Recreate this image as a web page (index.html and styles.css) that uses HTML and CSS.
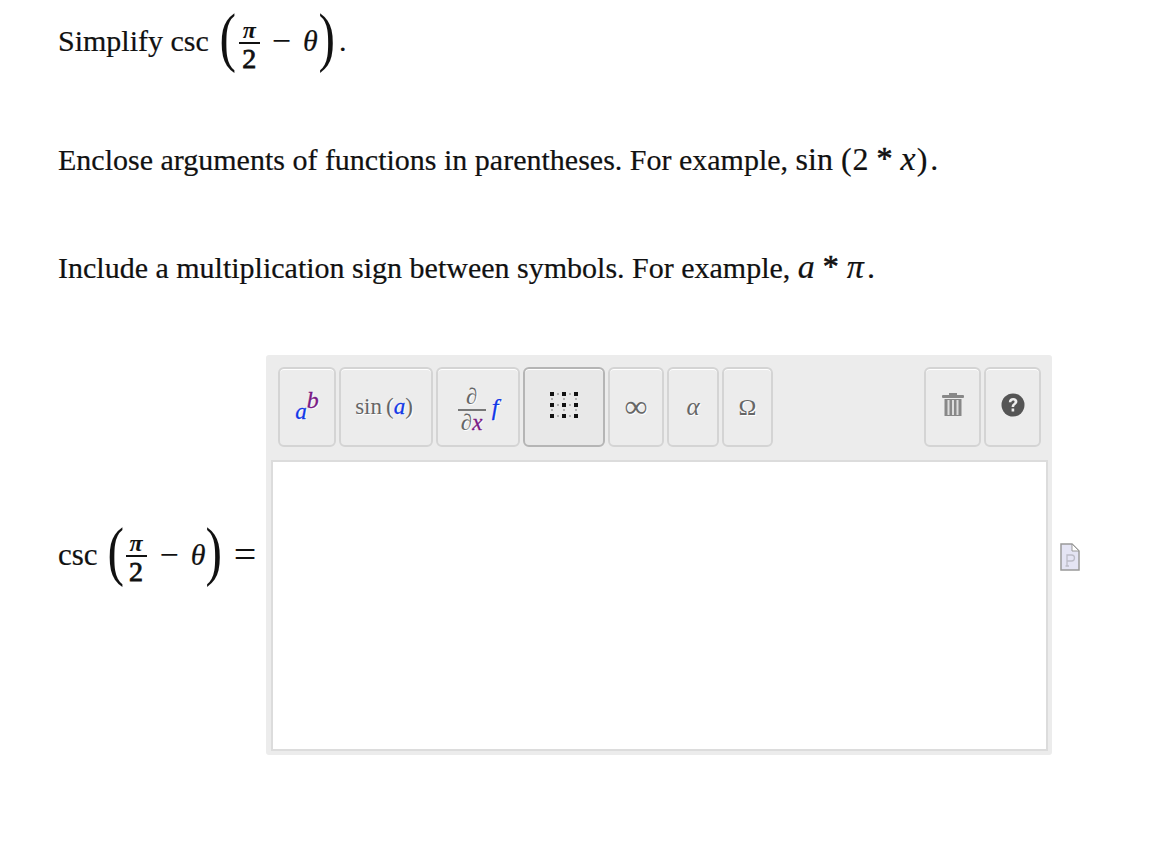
FILE: index.html
```html
<!DOCTYPE html>
<html lang="en">

<head>
    <meta charset="UTF-8">
    <title>Simplify csc</title>
    <link rel="stylesheet" href="styles.css">
</head>

<body>
    <div class="page">
        <div class="prompt first">
            <span>Simplify csc</span>
            <span class="paren">(</span>
            <span class="frac"><i class="num">π</i><span class="den">2</span></span>
            <span class="minus">−</span>
            <i class="theta">θ</i>
            <span class="paren right">)</span>
            <span class="dot">.</span>
        </div>

        <div class="prompt second">Enclose arguments of functions in parentheses. For example, <span class="math">sin<span class="mpar">(</span>2<span class="star">*</span><i class="mvar">x</i><span class="mpar close">)</span><span class="mdot">.</span></span></div>

        <div class="prompt third">Include a multiplication sign between symbols. For example, <span class="math"><i class="mvar">a</i><span class="star">*</span><i class="mvar">π</i><span class="mdot">.</span></span></div>

        <div class="answer-row">
            <div class="label">
                <span class="csc">csc</span>
                <span class="paren">(</span>
                <span class="frac"><i class="num">π</i><span class="den">2</span></span>
                <span class="minus">−</span>
                <i class="theta">θ</i>
                <span class="paren right">)</span>
                <span class="equals">=</span>
            </div>

            <div class="editor">
                <div class="toolbar">
                    <button class="tool w-power"><i class="blue">a</i><sup class="purple">b</sup></button>
                    <button class="tool w-func">sin<span class="fn-par">(</span><i class="blue">a</i><span class="fn-par-r">)</span></button>
                    <button class="tool w-deriv">
                        <span class="dfrac"><span class="dtop">∂</span><span class="dbot">∂<i class="purple">x</i></span></span>
                        <i class="blue fvar">f</i>
                    </button>
                    <button class="tool w-matrix active">
                        <svg class="tool-icon" width="30" height="28" viewBox="0 0 30 28">
                            <g fill="#111">
                                <rect x="1" y="1" width="4" height="4" />
                                <rect x="13" y="1" width="4" height="4" />
                                <rect x="25" y="1" width="4" height="4" />
                                <rect x="1" y="12" width="4" height="4" />
                                <rect x="13" y="12" width="4" height="4" />
                                <rect x="25" y="12" width="4" height="4" />
                                <rect x="1" y="23" width="4" height="4" />
                                <rect x="13" y="23" width="4" height="4" />
                                <rect x="25" y="23" width="4" height="4" />
                            </g>
                            <g fill="#b0b0b0">
                                <rect x="8" y="2" width="2" height="2" />
                                <rect x="20" y="2" width="2" height="2" />
                                <rect x="8" y="13" width="2" height="2" />
                                <rect x="20" y="13" width="2" height="2" />
                                <rect x="8" y="24" width="2" height="2" />
                                <rect x="20" y="24" width="2" height="2" />
                                <rect x="2" y="7" width="2" height="2" />
                                <rect x="14" y="7" width="2" height="2" />
                                <rect x="26" y="7" width="2" height="2" />
                                <rect x="2" y="18" width="2" height="2" />
                                <rect x="14" y="18" width="2" height="2" />
                                <rect x="26" y="18" width="2" height="2" />
                            </g>
                        </svg>
                    </button>
                    <button class="tool w-inf"><span class="inf">∞</span></button>
                    <button class="tool w-alpha"><i class="alpha">α</i></button>
                    <button class="tool w-omega"><span class="omega">Ω</span></button>
                    <span class="spacer"></span>
                    <button class="tool w-icon">
                        <svg class="tool-icon" width="22" height="24" viewBox="0 0 22 24">
                            <rect x="7" y="0" width="8" height="2" fill="#888" />
                            <rect x="0" y="2" width="22" height="3" rx="1" fill="#888" />
                            <path d="M2.500 6h17v17h-17z" fill="#888" />
                            <path d="M5.500 7h2v15h-2zM10 7h2v15h-2zM14.500 7h2v15h-2z" fill="#ddd" />
                        </svg>
                    </button>
                    <button class="tool w-icon">
                        <svg class="tool-icon" width="24" height="24" viewBox="0 0 24 24">
                            <circle cx="12" cy="12" r="11.500" fill="#555" />
                            <path d="M7.800 9.200c0-2.600 1.900-4.200 4.400-4.200 2.500 0 4.200 1.500 4.200 3.600 0 2.900-3.200 3-3.200 5.400h-2.600c0-3.400 3-3.600 3-5.300 0-.8-.6-1.300-1.500-1.300-1 0-1.600.7-1.700 1.800z" fill="#eee" />
                            <rect x="10.600" y="15.500" width="2.600" height="3" fill="#eee" />
                        </svg>
                    </button>
                </div>
                <div class="input-box"></div>
            </div>

            <svg class="doc-icon" width="20" height="28" viewBox="0 0 20 28">
                <path d="M1 1h11l7 7v19H1z" fill="#e4e4f4" stroke="#999" stroke-width="1.500" />
                <path d="M12 1v7h7z" fill="#fff" stroke="#999" />
                <path d="M7 23V12h4.500a3 3 0 0 1 0 6H7M5.500 23h3.500" fill="none" stroke="#bcbcc8" stroke-width="1.300" />
            </svg>
        </div>
    </div>
</body>

</html>
```

FILE: styles.css
```css
body {
    margin: 0;
    font-family: "Liberation Serif", serif;
    font-size: 30px;
    color: #111;
    background: #fff;
}

.page {
    padding: 0 0 0 58px;
}

.prompt {
    line-height: 34px;
    white-space: nowrap;
    -webkit-text-stroke: 0.2px #111;
}

.first {
    display: flex;
    align-items: center;
    height: 66px;
    margin-top: 8px;
}

.second {
    margin-top: 69px;
}

.third {
    margin-top: 74px;
}

.paren {
    font-size: 66px;
    line-height: 60px;
    font-weight: normal;
    transform: scaleX(0.75);
    width: 20px;
    margin: -8px 0 0 8px;
    text-align: center;
    -webkit-text-stroke: 0;
}

.paren.right {
    margin-left: -2px;
}

.frac {
    display: inline-flex;
    flex-direction: column;
    align-items: center;
    width: 21px;
    margin: 12px 0 0 2px;
}

.num {
    width: 100%;
    text-align: center;
    border-bottom: 2px solid #111;
    padding-bottom: 2px;
    font-size: 24px;
    line-height: 20px;
    font-weight: bold;
    -webkit-text-stroke: 0;
}

.den {
    font-size: 28px;
    line-height: 30px;
    -webkit-text-stroke: 0.8px #111;
}

.minus {
    font-size: 34px;
    line-height: 34px;
    margin-left: 12px;
    -webkit-text-stroke: 0;
}

.theta {
    margin-left: 12px;
    width: 15px;
    font-size: 30px;
}

.dot {
    margin: 0 0 0 3px;
    align-self: flex-end;
    padding-bottom: 16px;
}

.math {
    font-size: 32px;
    line-height: 0;
}

.mpar {
    margin: 0 1px 0 8px;
}

.mpar.close {
    margin: 0 0 0 1px;
}

.mdot {
    margin-left: 3px;
}

.star {
    font-size: 32px;
    line-height: 0;
    margin: 0 8px 0 8px;
    vertical-align: 1px;
    -webkit-text-stroke: 0.6px #111;
}

.mvar {
    font-size: 34px;
    line-height: 0;
}

.answer-row {
    display: flex;
    align-items: center;
    margin-top: 70px;
}

.label {
    display: flex;
    align-items: center;
    width: 208px;
    -webkit-text-stroke: 0.2px #111;
}

.csc {
    font-size: 31px;
}

.label .paren {
    margin-left: 7px;
}

.label .paren.right {
    margin-left: -3px;
}

.label .frac {
    margin: 10px 0 0 1px;
}

.label .minus {
    margin-left: 13px;
}

.equals {
    font-size: 40px;
    line-height: 34px;
    margin-left: 11px;
    -webkit-text-stroke: 0;
}

.editor {
    width: 786px;
    height: 400px;
    background: #ececec;
    border-radius: 3px;
    display: flex;
    flex-direction: column;
}

.toolbar {
    display: flex;
    gap: 3px;
    padding: 12px 11px 0 12px;
}

.tool {
    height: 80px;
    padding: 0;
    display: flex;
    align-items: center;
    justify-content: center;
    background: #ececec;
    border: 2px solid #d4d4d4;
    border-radius: 6px;
    box-shadow: inset 0 1px 0 #fff;
    font-family: "Liberation Serif", serif;
    font-size: 23px;
    color: #666;
    text-shadow: 1px 1px 0 #fff;
}

.tool.active {
    border-color: #b5b5b5;
    background: #e8e8e8;
}

.tool-icon {
    margin-bottom: 4px;
}

.w-power { width: 58px; }
.w-func { width: 94px; padding-right: 4px; }
.w-deriv { width: 84px; }
.w-matrix { width: 82px; }
.w-inf { width: 56px; }
.w-alpha { width: 52px; }
.w-omega { width: 51px; }
.w-icon { width: 57px; }

.spacer {
    flex: 1;
}

.blue {
    color: #1238e6;
    font-weight: 500;
    -webkit-text-stroke: 0.3px #1238e6;
}

.purple {
    color: #7a1a85;
    -webkit-text-stroke: 0.3px #7a1a85;
}

.w-power i {
    font-size: 23px;
    margin-top: 10px;
}

.w-power sup {
    font-size: 24px;
    font-style: italic;
    line-height: 1;
    margin: -14px 0 0 0;
}

.fn-par {
    margin-left: 4px;
}

.dfrac {
    display: inline-flex;
    flex-direction: column;
    align-items: center;
    margin-top: 4px;
    font-size: 23px;
    line-height: 23px;
}

.dtop {
    width: 28px;
    border-bottom: 2px solid #777;
    padding-bottom: 1px;
}

.dbot {
    white-space: nowrap;
}

.fvar {
    font-size: 24px;
    margin: 0 0 0 6px;
}

.inf {
    font-size: 32px;
    line-height: 30px;
    margin-bottom: 3px;
}

.alpha {
    font-size: 25px;
}

.omega {
    font-size: 24px;
}

.input-box {
    margin: 13px 4px 4px 5px;
    flex: 1;
    background: #fff;
    border: 2px solid #dcdcdc;
}

.doc-icon {
    margin: 4px 0 0 8px;
}
```
